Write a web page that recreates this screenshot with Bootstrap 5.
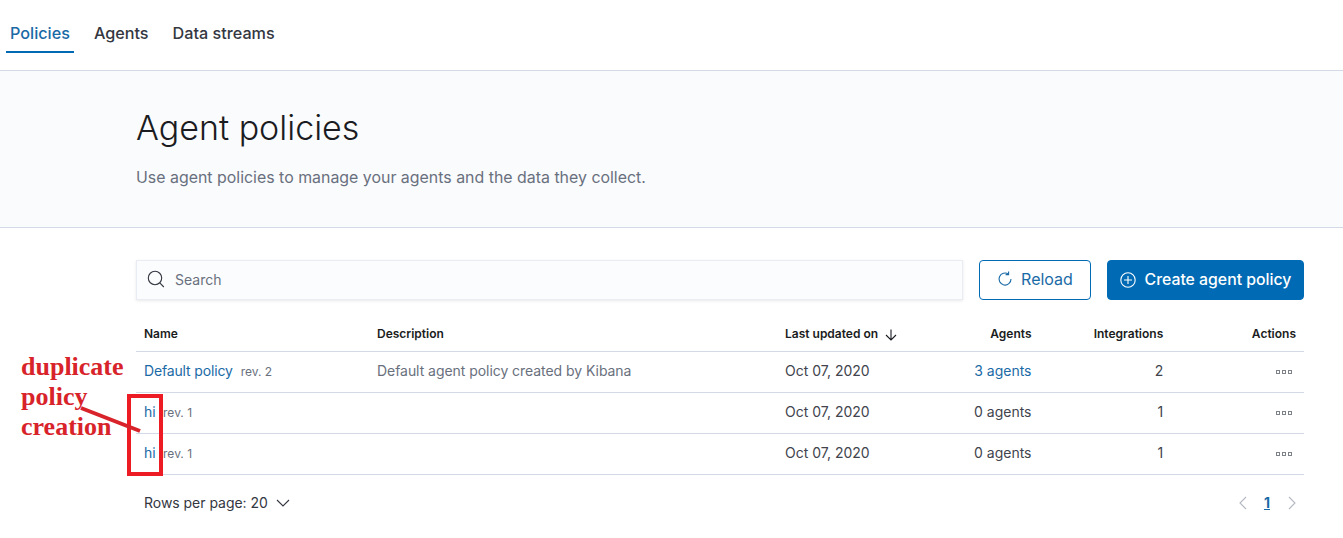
<!DOCTYPE html>
<html lang="en">
<head>
<meta charset="utf-8">
<title>Agent policies</title>
<link href="https://cdn.jsdelivr.net/npm/bootstrap@5.3.0/dist/css/bootstrap.min.css" rel="stylesheet">
<style>
html,body{height:538px;overflow:hidden}
body{font-family:Inter,"Liberation Sans",sans-serif;color:#343741;background:#fff;position:relative;font-size:14px}
.tabbar{height:71px;border-bottom:1px solid #d3dae6;padding:14px 6px 0;gap:16px}
.tabbar .nav-link{font-size:16.2px;font-weight:500;color:#343741;padding:7px 4px 7px;height:39px;line-height:24px;border-bottom:2px solid transparent;border-radius:0}
.tabbar .nav-link.active{color:#1a6aa6;border-bottom-color:#006bb4}
.herobox{height:157px;background:#fafbfd;border-bottom:1px solid #d3dae6;padding:33px 0 0 136px}
.herobox h1{font-size:34px;font-weight:300;line-height:48px;color:#1a1c21;margin:0 0 14px}
.herobox p{font-size:15.92px;line-height:24px;color:#69707d;margin:0}
.mainbox{padding:32px 39px 0 136px}
.searchwrap{width:827px;height:40px}
.searchwrap .form-control{height:40px;padding:0 0 2px 38px;font-size:14px;background:#fbfcfd;border:1px solid #e9edf3;border-radius:0;box-shadow:0 1px 3px rgba(0,0,0,.09);color:#69707d}
.searchwrap .form-control::placeholder{color:#69707d;opacity:1}
.searchico{position:absolute;left:11px;top:10px}
.btn-reload,.btn-create{height:40px;font-size:16px;line-height:24px;border-radius:4px;display:flex;align-items:center;justify-content:center;padding:0 0 2px}
.btn-reload{width:112px;margin-left:16px;border:1px solid #006bb4;color:#1a6aa6;background:#fff;gap:8px}
.btn-create{width:197px;margin-left:16px;border:1px solid #006bb4;background:#006bb4;color:#fff;font-weight:500;font-size:15.8px;gap:9px;padding-bottom:1px}
.policytbl{table-layout:fixed;width:1168px;margin:18px 0 0;font-size:14px;color:#41444d}
.policytbl>*>tr>*{padding:0 8px;border-bottom:1px solid #d3dae6;vertical-align:middle;background:transparent;color:inherit;box-shadow:none}
.policytbl thead th{height:33px;font-size:12px;font-weight:600;line-height:16px;color:#1a1c21}
.policytbl tbody td{height:41px;font-size:14px;line-height:20px}
.policytbl>tbody>tr>td:nth-child(n+2):not(:last-child){padding-bottom:2px}
.policytbl>*>tr>.text-end.sidecol{padding-right:9px}
.wname{width:233px}.wdesc{width:408px}
.policytbl a{color:#1a6aa6;text-decoration:none}
.policytbl .namelink{letter-spacing:-.15px}
.revtxt{font-size:12px;color:#69707d}
.gapa{margin-left:8px}.gapb{margin-left:4px}
.dotsrow{display:flex;justify-content:flex-end;gap:2px;padding-right:4px}
.dotsq{width:4px;height:4px;border:1px solid #7d828b;display:block}
.policytbl>tbody>tr>td.desctxt{color:#69707d;letter-spacing:-.05px}
.pagerrow{padding:12px 8px 0;height:44px;line-height:24px;color:#343741}
.rowslabel{letter-spacing:-.03px}
.pagenum{font-size:14px;font-weight:700;color:#1a6aa6;text-decoration:underline;margin:0 18px 0 17px}
.notewrap{position:absolute;left:21px;top:352px;font-family:"Liberation Serif",serif;font-weight:700;font-size:26px;line-height:30px;color:#d8232a;width:110px}
.redbox{position:absolute;left:127px;top:394px;width:36px;height:82px;border:4px solid #ed1c24}
.redline{position:absolute;left:0;top:0;pointer-events:none}
</style>
</head>
<body>
<ul class="nav tabbar">
  <li class="nav-item"><a class="nav-link active" href="#">Policies</a></li>
  <li class="nav-item"><a class="nav-link" href="#">Agents</a></li>
  <li class="nav-item"><a class="nav-link" href="#">Data streams</a></li>
</ul>
<header class="herobox">
  <h1>Agent policies</h1>
  <p>Use agent policies to manage your agents and the data they collect.</p>
</header>
<main class="mainbox">
  <div class="d-flex">
    <div class="searchwrap position-relative">
      <svg class="searchico" width="18" height="18" viewBox="0 0 18 18" fill="none" stroke="#343741" stroke-width="1.1"><circle cx="8" cy="8" r="6.7"/><path d="M12.8 12.8l4 4.2"/></svg>
      <input class="form-control" type="text" placeholder="Search">
    </div>
    <button class="btn btn-reload" type="button">
      <svg width="16" height="16" viewBox="0 0 16 16" fill="none" stroke="#1a6aa6" stroke-width="1.1"><path d="M11.5 3.2A6 6 0 1 0 14 8"/><path d="M11.6.6v3h-3" /></svg>
      Reload
    </button>
    <button class="btn btn-create" type="button">
      <svg width="16" height="16" viewBox="0 0 16 16" fill="none" stroke="#fff" stroke-width="1.1"><circle cx="8" cy="8" r="7.2"/><path d="M8 4v8M4 8h8"/></svg>
      Create agent policy
    </button>
  </div>
  <table class="table policytbl">
    <colgroup><col class="wname"><col class="wdesc"><col><col><col><col></colgroup>
    <thead>
      <tr>
        <th>Name</th>
        <th>Description</th>
        <th>Last updated on <svg class="ms-1" width="12" height="12" viewBox="0 0 12 12" fill="none" stroke="#1a1c21" stroke-width="1.1"><path d="M6 .5v10.5M1 6l5 5 5-5"/></svg></th>
        <th class="text-end sidecol">Agents</th>
        <th class="text-end sidecol">Integrations</th>
        <th class="text-end">Actions</th>
      </tr>
    </thead>
    <tbody>
      <tr>
        <td><a class="namelink" href="#">Default policy</a><span class="revtxt gapa">rev. 2</span></td>
        <td class="desctxt">Default agent policy created by Kibana</td>
        <td>Oct 07, 2020</td>
        <td class="text-end sidecol"><a href="#">3 agents</a></td>
        <td class="text-end sidecol">2</td>
        <td><div class="dotsrow"><i class="dotsq"></i><i class="dotsq"></i><i class="dotsq"></i></div></td>
      </tr>
      <tr>
        <td><a href="#">hi</a><span class="revtxt gapb">&nbsp;rev. 1</span></td>
        <td></td>
        <td>Oct 07, 2020</td>
        <td class="text-end sidecol">0 agents</td>
        <td class="text-end sidecol">1</td>
        <td><div class="dotsrow"><i class="dotsq"></i><i class="dotsq"></i><i class="dotsq"></i></div></td>
      </tr>
      <tr>
        <td><a href="#">hi</a><span class="revtxt gapb">&nbsp;rev. 1</span></td>
        <td></td>
        <td>Oct 07, 2020</td>
        <td class="text-end sidecol">0 agents</td>
        <td class="text-end sidecol">1</td>
        <td><div class="dotsrow"><i class="dotsq"></i><i class="dotsq"></i><i class="dotsq"></i></div></td>
      </tr>
    </tbody>
  </table>
  <div class="d-flex justify-content-between align-items-center pagerrow">
    <div class="d-flex align-items-center">
      <span class="rowslabel">Rows per page: 20</span>
      <svg class="ms-2" width="14" height="8" viewBox="0 0 14 8" fill="none" stroke="#343741" stroke-width="1.1"><path d="M1 1l6 6 6-6"/></svg>
    </div>
    <div class="d-flex align-items-center">
      <svg width="8" height="14" viewBox="0 0 8 14" fill="none" stroke="#b4b8c0" stroke-width="1.1"><path d="M7 1L1 7l6 6"/></svg>
      <span class="pagenum">1</span>
      <svg width="8" height="14" viewBox="0 0 8 14" fill="none" stroke="#b4b8c0" stroke-width="1.1"><path d="M1 1l6 6-6 6"/></svg>
    </div>
  </div>
</main>
<div class="notewrap">duplicate policy creation</div>
<div class="redbox"></div>
<svg class="redline" width="200" height="538" viewBox="0 0 200 538"><path d="M81 408L140 431" stroke="#d8232a" stroke-width="4" fill="none"/></svg>
<script src="https://cdn.jsdelivr.net/npm/bootstrap@5.3.0/dist/js/bootstrap.bundle.min.js"></script>
</body>
</html>
